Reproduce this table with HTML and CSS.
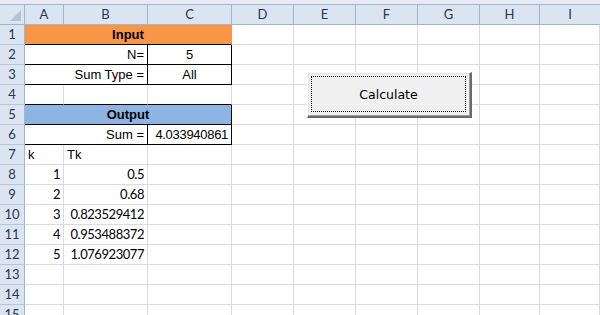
FILE: index.html
```html
<!DOCTYPE html>
<html>
<head>
<meta charset="utf-8">
<link rel="stylesheet" href="styles.css">
</head>
<body>
<div class="app">
  <div class="topstrip"></div>
  <div class="sheet">
    <div class="hd corner"><span class="tri"></span></div>
    <div class="hd">A</div><div class="hd">B</div><div class="hd">C</div><div class="hd">D</div><div class="hd">E</div><div class="hd">F</div><div class="hd">G</div><div class="hd">H</div><div class="hd last">I</div>

    <div class="rh">1</div>
    <div class="c span3 orange ctr bold bkb">Input</div>
    <div class="c"></div><div class="c"></div><div class="c"></div><div class="c"></div><div class="c"></div><div class="c"></div>

    <div class="rh">2</div>
    <div class="c span2 r bkr bkb">N=</div>
    <div class="c ctr bkr bkb">5</div>
    <div class="c"></div><div class="c"></div><div class="c"></div><div class="c"></div><div class="c"></div><div class="c"></div>

    <div class="rh">3</div>
    <div class="c span2 r bkr bkb">Sum Type =</div>
    <div class="c ctr bkr bkb">All</div>
    <div class="c"></div><div class="c"></div><div class="c"></div><div class="c"></div><div class="c"></div><div class="c"></div>

    <div class="rh">4</div>
    <div class="c bkb"></div><div class="c bkb"></div><div class="c bkb"></div>
    <div class="c"></div><div class="c"></div><div class="c"></div><div class="c"></div><div class="c"></div><div class="c"></div>

    <div class="rh">5</div>
    <div class="c span3 blue ctr bold bkr bkb">Output</div>
    <div class="c"></div><div class="c"></div><div class="c"></div><div class="c"></div><div class="c"></div><div class="c"></div>

    <div class="rh">6</div>
    <div class="c span2 r bkr bkb">Sum =</div>
    <div class="c r bkr bkb num">4.033940861</div>
    <div class="c"></div><div class="c"></div><div class="c"></div><div class="c"></div><div class="c"></div><div class="c"></div>

    <div class="rh">7</div>
    <div class="c">k</div><div class="c">Tk</div><div class="c"></div>
    <div class="c"></div><div class="c"></div><div class="c"></div><div class="c"></div><div class="c"></div><div class="c"></div>

    <div class="rh">8</div>
    <div class="c r cal">1</div><div class="c r cal">0.5</div><div class="c"></div>
    <div class="c"></div><div class="c"></div><div class="c"></div><div class="c"></div><div class="c"></div><div class="c"></div>

    <div class="rh">9</div>
    <div class="c r cal">2</div><div class="c r cal">0.68</div><div class="c"></div>
    <div class="c"></div><div class="c"></div><div class="c"></div><div class="c"></div><div class="c"></div><div class="c"></div>

    <div class="rh">10</div>
    <div class="c r cal">3</div><div class="c r cal">0.823529412</div><div class="c"></div>
    <div class="c"></div><div class="c"></div><div class="c"></div><div class="c"></div><div class="c"></div><div class="c"></div>

    <div class="rh">11</div>
    <div class="c r cal">4</div><div class="c r cal">0.953488372</div><div class="c"></div>
    <div class="c"></div><div class="c"></div><div class="c"></div><div class="c"></div><div class="c"></div><div class="c"></div>

    <div class="rh">12</div>
    <div class="c r cal">5</div><div class="c r cal">1.076923077</div><div class="c"></div>
    <div class="c"></div><div class="c"></div><div class="c"></div><div class="c"></div><div class="c"></div><div class="c"></div>

    <div class="rh">13</div>
    <div class="c"></div><div class="c"></div><div class="c"></div>
    <div class="c"></div><div class="c"></div><div class="c"></div><div class="c"></div><div class="c"></div><div class="c"></div>

    <div class="rh">14</div>
    <div class="c"></div><div class="c"></div><div class="c"></div>
    <div class="c"></div><div class="c"></div><div class="c"></div><div class="c"></div><div class="c"></div><div class="c"></div>

    <div class="rh">15</div>
    <div class="c"></div><div class="c"></div><div class="c"></div>
    <div class="c"></div><div class="c"></div><div class="c"></div><div class="c"></div><div class="c"></div><div class="c"></div>
  </div>
  <button class="btn"><span class="focus">Calculate</span></button>
</div>
</body>
</html>
```

FILE: styles.css
```css
* { box-sizing: border-box; }
html, body { margin: 0; padding: 0; background: #ffffff; overflow: hidden; }
.app { position: relative; width: 600px; height: 315px; overflow: hidden; }
.topstrip { height: 5px; background: #e6ebf1; border-bottom: 1px solid #a7b8cc; }
.sheet {
  display: grid;
  grid-template-columns: 25px 39px 84px 84px 62px 62px 62px 62px 60px 1fr;
  grid-auto-rows: 20px;
  font-family: "Liberation Sans", Arial, sans-serif;
  font-size: 13px;
  color: #000;
}
.hd {
  background: #dbe5f1;
  border-right: 1px solid #9eb6ce;
  border-bottom: 1px solid #9eb6ce;
  font-family: Lato, "Open Sans", sans-serif;
  font-size: 13px;
  color: #27364d;
  text-align: center;
  line-height: 19px;
}
.hd.last { border-right: none; }
.corner { position: relative; }
.tri {
  position: absolute; right: 3px; bottom: 3px;
  width: 0; height: 0;
  border-left: 11px solid transparent;
  border-bottom: 11px solid #b5c3d3;
}
.rh {
  background: #dbe5f1;
  border-right: 1px solid #9eb6ce;
  border-bottom: 1px solid #b4c6da;
  font-family: Lato, "Open Sans", sans-serif;
  font-size: 13px;
  color: #27364d;
  text-align: center;
  line-height: 19px;
}
.c {
  border-right: 1px solid #d9dbde;
  border-bottom: 1px solid #d9dbde;
  line-height: 19px;
  padding: 0 3px;
  white-space: nowrap;
  overflow: hidden;
}
.span2 { grid-column: span 2; }
.span3 { grid-column: span 3; }
.r { text-align: right; }
.ctr { text-align: center; }
.bold { font-weight: bold; }
.orange { background: #f79646; border-right-color: #f79646; }
.blue { background: #8db4e2; }
.bkr { border-right-color: #000; }
.bkb { border-bottom-color: #000; }
.num { letter-spacing: -0.3px; }
.cal { font-family: Lato, "Open Sans", sans-serif; font-size: 13px; letter-spacing: -0.45px; }
.btn {
  position: absolute;
  left: 307px; top: 72px;
  width: 165px; height: 46px;
  margin: 0; padding: 3px 4px 4px 3px;
  background: #f0f0f0;
  border-top: 1px solid #ffffff;
  border-left: 1px solid #ffffff;
  border-right: 2px solid #696969;
  border-bottom: 2px solid #696969;
  box-shadow: inset -1px -1px 0 #a0a0a0, inset 1px 1px 0 #e3e3e3;
  font-family: "DejaVu Sans", Tahoma, sans-serif;
  font-size: 12.5px;
  color: #000;
}
.focus {
  display: flex;
  align-items: center;
  justify-content: center;
  width: 100%; height: 100%;
  border: 1px dotted #000;
}
```
